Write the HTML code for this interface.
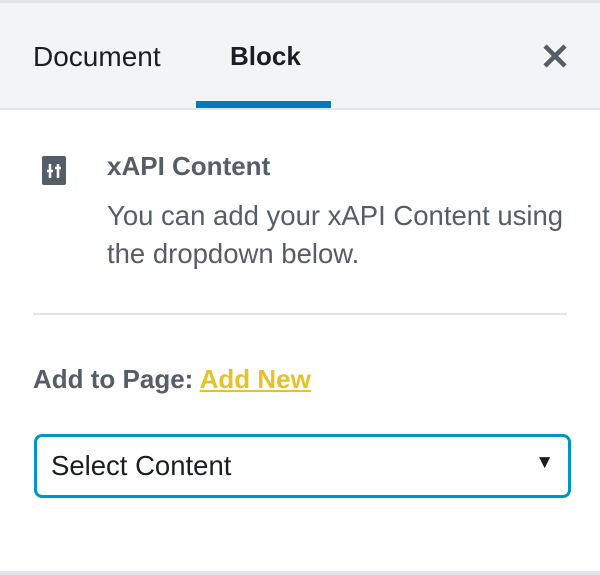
<!DOCTYPE html>
<html><head><style>
body{margin:0;width:600px;height:575px;background:#fff;font-family:"Liberation Sans",sans-serif;position:relative;overflow:hidden}
.top{position:absolute;left:0;top:0;width:600px;height:3px;background:#e2e4e7}
.hdr{position:absolute;left:0;top:3px;width:600px;height:105px;background:#f3f4f5;border-bottom:2px solid #e2e4e7}
.t{position:absolute;font-size:28px;color:#191e23;top:41px}
.ul{position:absolute;left:196px;top:101px;width:135px;height:7px;background:#007cba}
.x{position:absolute;left:541px;top:42px}
.icon{position:absolute;left:42px;top:156px;width:24px;height:29px;background:#555d66;border-radius:2px}
.tt{position:absolute;left:107px;top:151px;font-size:26px;font-weight:bold;color:#555d66}
.d{position:absolute;left:107px;top:197px;font-size:27.5px;line-height:38px;color:#555d66;width:475px}
.hr{position:absolute;left:33px;top:313px;width:534px;height:2px;background:#e2e4e7}
.add{position:absolute;left:33px;top:364px;font-size:26px;font-weight:bold;color:#555d66}
.add span{color:#e6c12c;text-decoration:underline}
.sel{position:absolute;left:34px;top:434px;width:531px;height:58px;border:3px solid #0095c8;border-radius:8px}
.sel .s{position:absolute;left:14px;top:13px;font-size:27.5px;color:#191e23}
.sel .a{position:absolute;right:14px;top:15px;font-size:19px;color:#191e23}
.bot{position:absolute;left:0;top:571px;width:600px;height:4px;background:#e2e4e7}
</style></head><body>
<div class="top"></div>
<div class="hdr"></div>
<div class="t" style="left:33px">Document</div>
<div class="t" style="left:230px;font-weight:bold;font-size:26px">Block</div>
<div class="ul"></div>
<svg class="x" width="28" height="28" viewBox="0 0 28 28"><path d="M4 4L24 24M24 4L4 24" stroke="#555d66" stroke-width="4.5"/></svg>
<div class="icon"><svg width="24" height="29" viewBox="0 0 24 29"><path d="M8 8V22M5 15H11M16 8V22M13 12H19" stroke="#fff" stroke-width="2.5"/></svg></div>
<div class="tt">xAPI Content</div>
<div class="d">You can add your xAPI Content using the dropdown below.</div>
<div class="hr"></div>
<div class="add">Add to Page: <span>Add New</span></div>
<div class="sel"><div class="s">Select Content</div><div class="a">▼</div></div>
<div class="bot"></div>
</body></html>
